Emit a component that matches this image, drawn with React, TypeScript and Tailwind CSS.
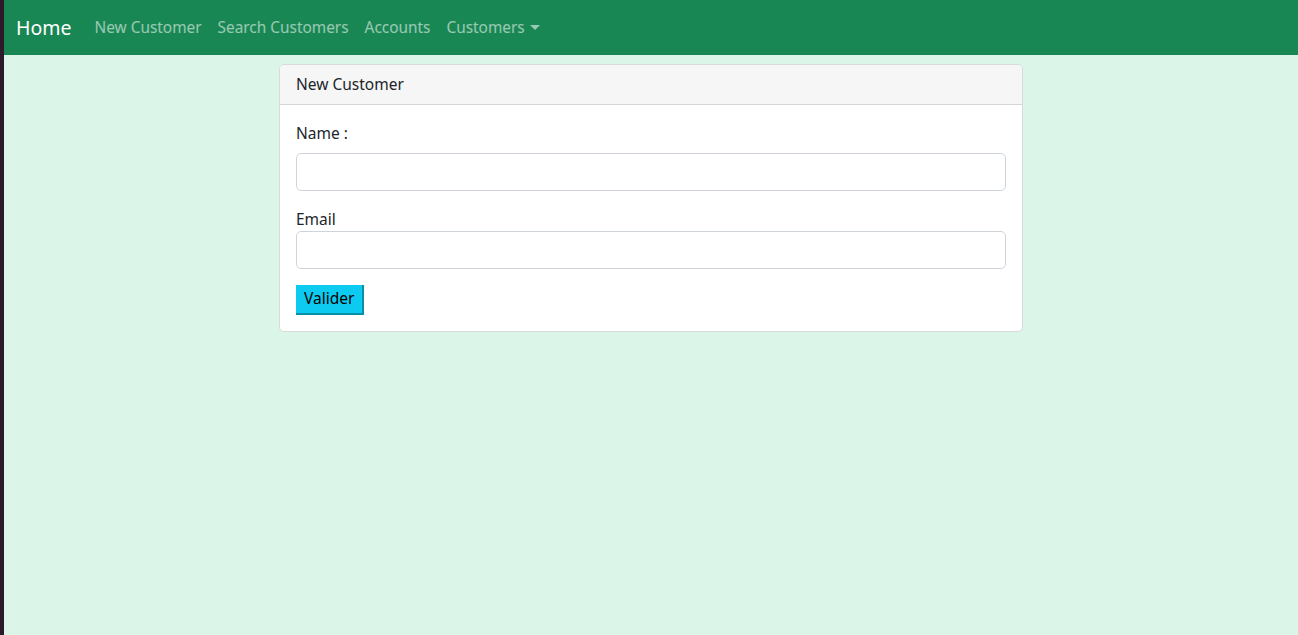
export default function App() {
  const links = ["New Customer", "Search Customers", "Accounts"];
  return (
    <div className="flex min-h-[635px] w-full font-['Noto_Sans',sans-serif] text-[#212529]">
      <div className="w-[4px] shrink-0 bg-[#2c1a2a]" />
      <div className="flex-1 bg-[#dcf5e9]">
        <nav className="flex h-[55px] items-center bg-[#198754] px-3">
          <span className="mr-[15px] text-[19.5px] text-white">Home</span>
          <div className="flex items-center">
            {links.map((l) => (
              <span key={l} className="px-2 text-[15.4px] text-white/55">
                {l}
              </span>
            ))}
            <span className="flex items-center px-2 text-[15.4px] text-white/55">
              Customers
              <span className="ml-[5px] mt-[1px] h-0 w-0 border-x-[5px] border-t-[5px] border-x-transparent border-t-white/55" />
            </span>
          </div>
        </nav>
        <div className="pt-[9px]">
          <div className="ml-[275px] w-[744px] overflow-hidden rounded-[5px] border border-[#dadada] bg-white">
            <div className="flex h-[40px] items-center border-b border-[#d6d6d6] bg-[#f6f6f6] px-4 text-[15.5px]">
              New Customer
            </div>
            <div className="px-4 pb-4 pt-[16px]">
              <div className="mb-[8px] text-[15.5px] leading-[24px]">Name :</div>
              <input className="block h-[38px] w-full rounded-[5px] border border-[#ced4da] bg-white" />
              <div className="mt-[16px] text-[15.5px] leading-[24px]">Email</div>
              <input className="block h-[38px] w-full rounded-[5px] border border-[#ced4da] bg-white" />
              <button className="mt-[16px] h-[30px] border-b-2 border-r-2 border-[#0a8fa8] bg-[#0dcaf0] px-[8px] text-[15.5px] text-black">
                Valider
              </button>
            </div>
          </div>
        </div>
      </div>
    </div>
  );
}
